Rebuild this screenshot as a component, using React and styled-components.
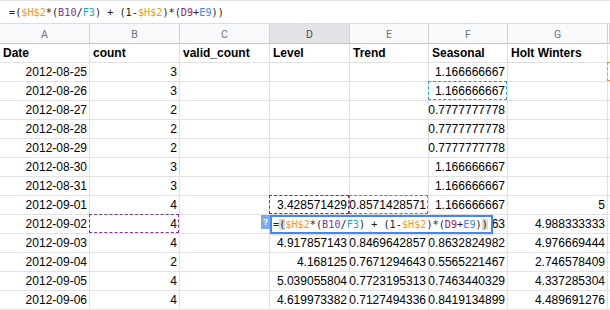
import React from "react";
import styled, { createGlobalStyle } from "styled-components";

const Global = createGlobalStyle`
  body { margin:0; background:#fff; overflow:hidden; }
  * { box-sizing:border-box; }
`;

const COLS = "90px 90px 90px 80px 79px 79px 100px 1fr";

const REF = {
  orange: "#f7981d",
  purple: "#7e3794",
  cyan: "#11a9cc",
  crimson: "#a61d4c",
  blue: "#4285f4",
};

const Sheet = styled.div`
  width:610px;
  height:310px;
  overflow:hidden;
  font-family:"Liberation Sans", Arial, sans-serif;
`;

const FormulaBar = styled.div`
  height:24px;
  border-top:1px solid #e3e3e3;
  border-bottom:1px solid #dadce0;
  display:flex;
  align-items:center;
  padding-left:9px;
  font:10.2px "DejaVu Sans Mono", monospace;
  color:#222;
  white-space:nowrap;
`;

const Tok = styled.span`
  color:${p => p.$c || "#222"};
  background:${p => (p.$hl ? "#dcdcdc" : "transparent")};
`;

const Row = styled.div`
  display:grid;
  grid-template-columns:${COLS};
  height:${p => p.$h || 19}px;
`;

const ColHead = styled.div`
  border-right:1px solid #d0d2d4;
  border-bottom:1px solid #c4c7c9;
  background:${p => (p.$active ? "#e1e3e6" : "#f8f9fa")};
  color:${p => (p.$active ? "#4a4f55" : "#6f7378")};
  font:10.5px Roboto, "Liberation Sans", sans-serif;
  display:flex;
  align-items:center;
  justify-content:center;
  padding-top:1px;
`;

const Cell = styled.div`
  position:relative;
  border-right:1px solid #e2e2e2;
  border-bottom:1px solid #e2e2e2;
  font-size:12px;
  font-weight:${p => (p.$bold ? 700 : 400)};
  color:#000;
  white-space:nowrap;
  display:flex;
  align-items:center;
  justify-content:${p => (p.$left ? "flex-start" : "flex-end")};
  padding:0 2px 0 3px;
  &::after {
    content:"";
    display:${p => (p.$ref ? "block" : "none")};
    position:absolute;
    left:-1px;
    top:-1px;
    right:0;
    bottom:0;
    border:1px dashed ${p => p.$ref};
    z-index:2;
  }
`;

const Editor = styled.div`
  position:absolute;
  left:0;
  top:0;
  height:19px;
  border:2px solid #4a86e8;
  background:#fff;
  display:flex;
  align-items:center;
  padding:0 3px 0 1px;
  font:10.2px "DejaVu Sans Mono", monospace;
  color:#222;
  white-space:nowrap;
  z-index:4;
  box-shadow:0 1px 3px rgba(0,0,0,0.18);
`;

const HelpTab = styled.div`
  position:absolute;
  left:-11px;
  top:-2px;
  width:9px;
  height:14px;
  background:#7baaf7;
  color:#fff;
  font:bold 9px "Liberation Sans", sans-serif;
  display:flex;
  align-items:center;
  justify-content:center;
`;

function Formula({ editing }) {
  return (
    <>
      <Tok>=</Tok>
      <Tok $hl={editing}>(</Tok>
      <Tok $c={REF.orange}>$H$2</Tok>
      <Tok>*(</Tok>
      <Tok $c={REF.purple}>B10</Tok>
      <Tok>/</Tok>
      <Tok $c={REF.cyan}>F3</Tok>
      <Tok>) + (1-</Tok>
      <Tok $c={REF.orange}>$H$2</Tok>
      <Tok>)*(</Tok>
      <Tok $c={REF.crimson}>D9</Tok>
      <Tok>+</Tok>
      <Tok $c={REF.blue}>E9</Tok>
      <Tok>)</Tok>
      <Tok $hl={editing}>)</Tok>
    </>
  );
}

const letters = ["A", "B", "C", "D", "E", "F", "G", ""];
const heads = ["Date", "count", "valid_count", "Level", "Trend", "Seasonal", "Holt Winters", ""];

const rows = [
  ["2012-08-25", "3", "", "", "", "1.166666667", "", ""],
  ["2012-08-26", "3", "", "", "", "1.166666667", "", ""],
  ["2012-08-27", "2", "", "", "", "0.7777777778", "", ""],
  ["2012-08-28", "2", "", "", "", "0.7777777778", "", ""],
  ["2012-08-29", "2", "", "", "", "0.7777777778", "", ""],
  ["2012-08-30", "3", "", "", "", "1.166666667", "", ""],
  ["2012-08-31", "3", "", "", "", "1.166666667", "", ""],
  ["2012-09-01", "4", "", "3.428571429", "0.8571428571", "1.166666667", "5", ""],
  ["2012-09-02", "4", "", "", "", "63", "4.988333333", ""],
  ["2012-09-03", "4", "", "4.917857143", "0.8469642857", "0.8632824982", "4.976669444", ""],
  ["2012-09-04", "2", "", "4.168125", "0.7671294643", "0.5565221467", "2.746578409", ""],
  ["2012-09-05", "4", "", "5.039055804", "0.7723195313", "0.7463440329", "4.337285304", ""],
  ["2012-09-06", "4", "", "4.619973382", "0.7127494336", "0.8419134899", "4.489691276", ""],
];

// dashed range outlines, keyed by cell address
const refs = {
  H2: REF.orange,
  F3: REF.cyan,
  D9: REF.crimson,
  E9: REF.blue,
  B10: REF.purple,
};

export default function App() {
  return (
    <Sheet>
      <Global />
      <FormulaBar>
        <Formula />
      </FormulaBar>
      <Row $h={20}>
        {letters.map((l, i) => (
          <ColHead key={i} $active={l === "D"}>{l}</ColHead>
        ))}
      </Row>
      <Row>
        {heads.map((h, i) => (
          <Cell key={i} $bold $left>{h}</Cell>
        ))}
      </Row>
      {rows.map((r, ri) => {
        const num = ri + 2;
        return (
          <Row key={ri}>
            {r.map((v, ci) => {
              const addr = letters[ci] ? letters[ci] + num : "H" + num;
              return (
                <Cell key={ci} $ref={refs[addr]}>
                  {v}
                  {addr === "D10" && (
                    <Editor>
                      <HelpTab>?</HelpTab>
                      <Formula editing />
                    </Editor>
                  )}
                </Cell>
              );
            })}
          </Row>
        );
      })}
    </Sheet>
  );
}
